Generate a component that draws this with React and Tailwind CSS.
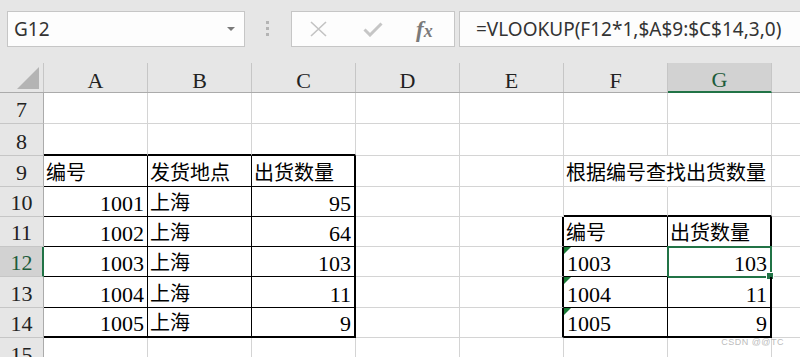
import React from "react";

const COLS = ["A", "B", "C", "D", "E", "F", "G"];
const ROWS = [
  [7, "h-[31px]"],
  [8, "h-[32px]"],
  [9, "h-[31px]"],
  [10, "h-[30px]"],
  [11, "h-[30px]"],
  [12, "h-[30px]"],
  [13, "h-[31px]"],
  [14, "h-[30px]"],
  [15, "h-[31px]"],
];

const cells = {
  A9: { t: "编号", cjk: true },
  B9: { t: "发货地点", cjk: true },
  C9: { t: "出货数量", cjk: true },
  F9: { t: "根据编号查找出货数量", cjk: true },
  A10: { t: "1001", right: true },
  A11: { t: "1002", right: true },
  A12: { t: "1003", right: true },
  A13: { t: "1004", right: true },
  A14: { t: "1005", right: true },
  B10: { t: "上海", cjk: true },
  B11: { t: "上海", cjk: true },
  B12: { t: "上海", cjk: true },
  B13: { t: "上海", cjk: true },
  B14: { t: "上海", cjk: true },
  C10: { t: "95", right: true },
  C11: { t: "64", right: true },
  C12: { t: "103", right: true },
  C13: { t: "11", right: true },
  C14: { t: "9", right: true },
  F11: { t: "编号", cjk: true },
  G11: { t: "出货数量", cjk: true },
  F12: { t: "1003", flag: true },
  F13: { t: "1004", flag: true },
  F14: { t: "1005", flag: true },
  G12: { t: "103", right: true },
  G13: { t: "11", right: true },
  G14: { t: "9", right: true },
};

// borders of each cell: right side and bottom side
const rightBorder = (c, r) => {
  if (c === "C" && r >= 9 && r <= 14) return "border-r-2 border-r-black";
  if ((c === "E" || c === "G") && r >= 11 && r <= 14)
    return "border-r-2 border-r-black";
  if ((c === "A" || c === "B") && r >= 9 && r <= 14)
    return "border-r border-r-black";
  if (c === "F" && r >= 11 && r <= 14) return "border-r border-r-black";
  if (c === "F" && r === 9) return "border-r border-r-transparent";
  return "border-r border-r-[#d4d4d4]";
};

const bottomBorder = (c, r) => {
  const left = c === "A" || c === "B" || c === "C";
  const right = c === "F" || c === "G";
  if (left && (r === 8 || r === 14)) return "border-b-2 border-b-black";
  if (right && (r === 10 || r === 14)) return "border-b-2 border-b-black";
  if (left && r >= 9 && r <= 13) return "border-b border-b-black";
  if (right && r >= 11 && r <= 13) return "border-b border-b-black";
  return "border-b border-b-[#d4d4d4]";
};

const Cell = ({ c, r }) => {
  const d = cells[c + r];
  const selected = c === "G" && r === 12;
  return (
    <div
      className={`relative w-[104px] shrink-0 flex items-end ${rightBorder(c, r)} ${bottomBorder(c, r)} ${
        d && d.right ? "justify-end" : "justify-start"
      }`}
    >
      {d && d.flag && (
        <div className="absolute left-0 top-0 w-0 h-0 border-t-[7px] border-t-[#1a7a36] border-r-[7px] border-r-transparent" />
      )}
      {d &&
        (d.cjk ? (
          <span className="whitespace-nowrap leading-none pb-[4px] px-[2px] text-[20px] text-black font-['Noto_Sans_CJK_SC',sans-serif]">
            {d.t}
          </span>
        ) : (
          <span className="whitespace-nowrap leading-none pb-[1px] px-[3px] text-[22px] text-black font-['Liberation_Serif',serif]">
            {d.t}
          </span>
        ))}
      {selected && (
        <div className="absolute -left-px -top-px -right-[2px] -bottom-[2px] border-2 border-[#217346]">
          <div className="absolute -right-[4px] -bottom-[4px] w-[8px] h-[8px] bg-[#217346] border border-white" />
        </div>
      )}
    </div>
  );
};

export default function App() {
  return (
    <div className="relative w-[800px] h-[357px] overflow-hidden bg-white">
      {/* formula bar */}
      <div className="h-[63px] bg-[#e6e6e6] flex items-start pt-[11px] pl-[7px]">
        <div className="w-[238px] h-[36px] shrink-0 bg-[#fdfdfd] border border-[#c6c6c6] flex items-center justify-between pl-[6px] pr-[9px]">
          <span className="text-[19px] text-[#333] font-['Noto_Sans',sans-serif]">
            G12
          </span>
          <span className="w-0 h-0 border-l-[4px] border-r-[4px] border-t-[4px] border-l-transparent border-r-transparent border-t-[#7a7a7a]" />
        </div>
        <div className="ml-[21px] mt-[10px] flex flex-col gap-[3px] shrink-0">
          <div className="w-[3px] h-[3px] bg-[#b4b4b4]" />
          <div className="w-[3px] h-[3px] bg-[#b4b4b4]" />
          <div className="w-[3px] h-[3px] bg-[#b4b4b4]" />
        </div>
        <div className="ml-[22px] w-[164px] h-[36px] shrink-0 bg-[#fdfdfd] border border-[#c6c6c6] flex items-center pl-[18px]">
          <svg width="17" height="16" viewBox="0 0 17 16">
            <path d="M1 1 L16 15 M16 1 L1 15" stroke="#c3c3c3" strokeWidth="1.6" fill="none" />
          </svg>
          <svg className="ml-[36px]" width="20" height="15" viewBox="0 0 20 15">
            <path d="M1.5 7.5 L7 13 L18.5 1.5" stroke="#c6c6c6" strokeWidth="3" fill="none" />
          </svg>
          <span className="ml-[33px] italic font-bold text-[#7a7a7a] font-['Liberation_Serif',serif] leading-none">
            <span className="text-[23px]">f</span>
            <span className="text-[18px]">x</span>
          </span>
        </div>
        <div className="ml-[4px] flex-1 h-[36px] bg-[#fdfdfd] border border-[#c6c6c6] border-r-0 flex items-center pl-[16px]">
          <span className="whitespace-nowrap text-[19px] text-[#333] font-['Noto_Sans',sans-serif]">
            =VLOOKUP(F12*1,$A$9:$C$14,3,0)
          </span>
        </div>
      </div>

      {/* column headers */}
      <div className="flex h-[30px] bg-[#e6e6e6] border-b border-b-[#ababab]">
        <div className="relative w-[44px] shrink-0 border-r border-r-[#c6c6c6]">
          <div className="absolute left-[17px] top-[4px] w-0 h-0 border-b-[22px] border-b-[#b4b4b4] border-l-[22px] border-l-transparent" />
        </div>
        {COLS.map((c) =>
          c === "G" ? (
            <div
              key={c}
              className="w-[104px] shrink-0 flex items-end justify-center bg-[#d2d2d2] border-r border-r-[#c6c6c6] border-b-2 border-b-[#217346] -mb-px"
            >
              <span className="leading-none text-[22px] text-[#1d5c3a] font-['Liberation_Serif',serif]">
                {c}
              </span>
            </div>
          ) : (
            <div
              key={c}
              className="w-[104px] shrink-0 flex items-end justify-center border-r border-r-[#c6c6c6]"
            >
              <span className="leading-none text-[22px] text-[#222] font-['Liberation_Serif',serif]">
                {c}
              </span>
            </div>
          )
        )}
        <div className="flex-1" />
      </div>

      {/* rows */}
      {ROWS.map(([r, h]) => (
        <div key={r} className={`flex ${h}`}>
          {r === 12 ? (
            <div className="w-[44px] shrink-0 flex items-end justify-center bg-[#d2d2d2] border-r-2 border-r-[#217346] border-b border-b-[#c6c6c6]">
              <span className="leading-none pb-[2px] pl-[1px] text-[22px] text-[#1d5c3a] font-['Liberation_Serif',serif]">
                {r}
              </span>
            </div>
          ) : (
            <div className="w-[44px] shrink-0 flex items-end justify-center bg-[#e6e6e6] border-r border-r-[#ababab] border-b border-b-[#c6c6c6]">
              <span className="leading-none pb-[2px] text-[22px] text-[#222] font-['Liberation_Serif',serif]">
                {r}
              </span>
            </div>
          )}
          {COLS.map((c) => (
            <Cell key={c} c={c} r={r} />
          ))}
          <div className="flex-1 border-b border-b-[#d4d4d4]" />
        </div>
      ))}

      <div className="absolute right-[16px] bottom-[10px] text-[9px] leading-none tracking-[0.5px] text-[#bcbcbc] font-['Liberation_Sans',sans-serif]">
        CSDN @@TC
      </div>
    </div>
  );
}
